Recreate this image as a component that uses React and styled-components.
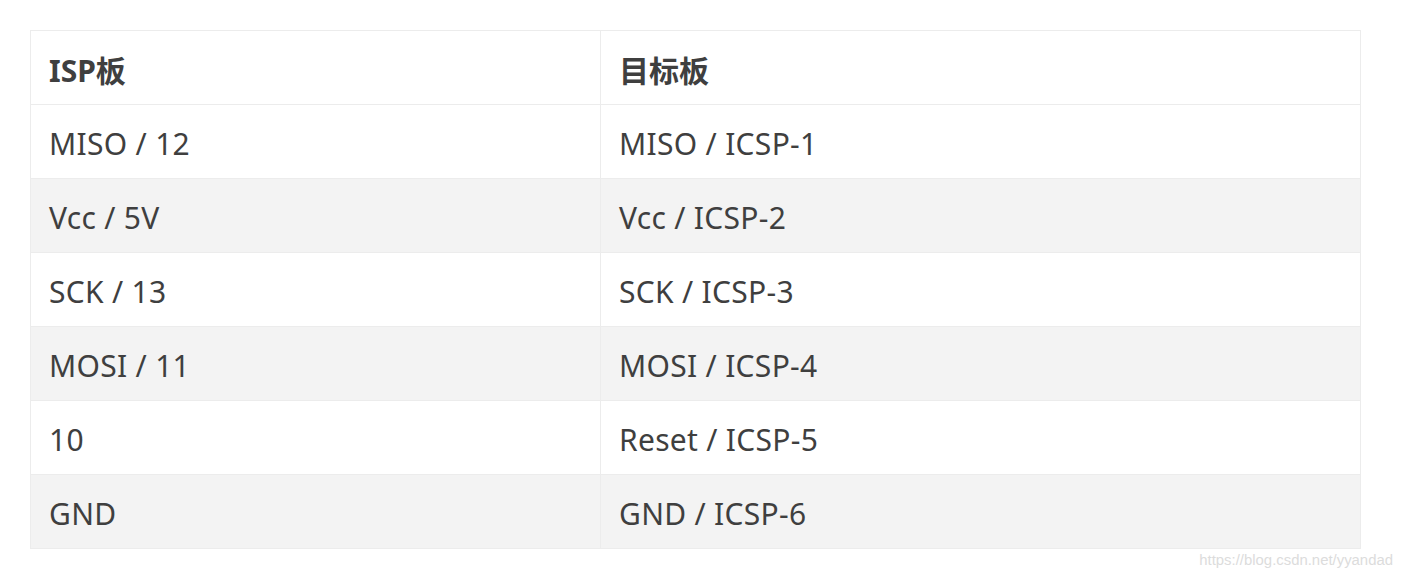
import React from 'react';
import styled, { createGlobalStyle } from 'styled-components';

const Global = createGlobalStyle`
  body {
    margin: 0;
    background: #fff;
    font-family: 'Noto Sans', 'Noto Sans CJK SC', sans-serif;
  }
`;

const Page = styled.div`
  padding: 30px 41px 0 30px;
  width: 1331px;
`;

const Table = styled.table`
  width: 1331px;
  border-collapse: collapse;
  table-layout: fixed;
  color: #3f3f3f;
  font-size: 30px;
`;

const Row = styled.tr`
  background: ${(p) => (p.$shaded ? '#f3f3f3' : '#fff')};
`;

const Head = styled.th`
  height: 74px;
  padding: 3px 18px 0;
  box-sizing: border-box;
  border: 1px solid #ececec;
  text-align: left;
  font-weight: 700;
  font-family: 'Noto Sans', 'Noto Sans CJK SC', sans-serif;
`;

const Cell = styled.td`
  height: 74px;
  padding: 3px 18px 0;
  box-sizing: border-box;
  border: 1px solid #ececec;
  white-space: nowrap;
  letter-spacing: 0.3px;
`;

const Watermark = styled.div`
  text-align: right;
  margin-right: -32px;
  margin-top: 3px;
  font-family: 'Liberation Sans', Arial, sans-serif;
  font-size: 14.9px;
  color: #dcdcdc;
`;

const rows = [
  ['MISO / 12', 'MISO / ICSP-1'],
  ['Vcc / 5V', 'Vcc / ICSP-2'],
  ['SCK / 13', 'SCK / ICSP-3'],
  ['MOSI / 11', 'MOSI / ICSP-4'],
  ['10', 'Reset / ICSP-5'],
  ['GND', 'GND / ICSP-6'],
];

export default function App() {
  return (
    <Page>
      <Global />
      <Table>
        <colgroup>
          <col style={{ width: 570 }} />
          <col />
        </colgroup>
        <thead>
          <tr>
            <Head>ISP板</Head>
            <Head>目标板</Head>
          </tr>
        </thead>
        <tbody>
          {rows.map((r, i) => (
            <Row key={i} $shaded={i % 2 === 1}>
              <Cell>{r[0]}</Cell>
              <Cell>{r[1]}</Cell>
            </Row>
          ))}
        </tbody>
      </Table>
      <Watermark>https://blog.csdn.net/yyandad</Watermark>
    </Page>
  );
}
